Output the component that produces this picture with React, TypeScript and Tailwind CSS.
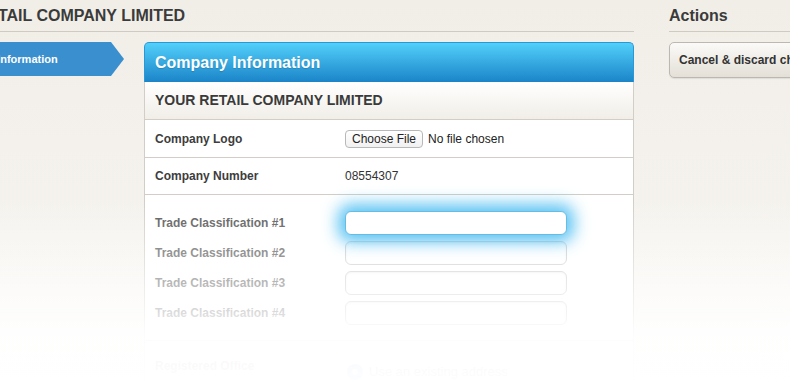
import React from 'react';

const trades = ['Trade Classification #1', 'Trade Classification #2', 'Trade Classification #3', 'Trade Classification #4'];

export default function App() {
  return (
    <div className="relative h-[381px] w-[790px] overflow-hidden bg-gradient-to-b from-[#f1eee8] to-[#f8f6f2] font-['Liberation_Sans',Arial,sans-serif] text-[#3a3a3a]">
      <div className="flex gap-[35px]">
        {/* main column */}
        <div className="w-[634px] shrink-0">
          <div className="h-[32px] overflow-hidden border-b border-[#cfcac2] pt-[7px]">
            <h1 className="-ml-[75px] whitespace-nowrap text-[16px] font-bold leading-[18px] text-[#3b3b3b]">
              YOUR RETAIL COMPANY LIMITED
            </h1>
          </div>

          <div className="mt-[10px] flex gap-[20px]">
            {/* step tab */}
            <div className="h-[34px] w-[124px] shrink-0 overflow-hidden bg-[#3a8fcf] [clip-path:polygon(0_0,calc(100%-13px)_0,100%_50%,calc(100%-13px)_100%,0_100%)]">
              <div className="-ml-[56px] whitespace-nowrap text-[11px] font-bold leading-[34px] text-white">
                Company Information
              </div>
            </div>

            {/* panel */}
            <div className="w-[490px] shrink-0">
              <div className="flex h-[40px] items-center rounded-t-[5px] border border-b-0 border-[#2a97d6] bg-gradient-to-b from-[#52d0fa] to-[#1a84c8] px-[10px]">
                <h2 className="text-[16px] font-bold text-white [text-shadow:0_1px_1px_rgba(0,0,0,0.15)]">Company Information</h2>
              </div>
              <div className="border-x border-[#d2cec7] bg-white">
                <div className="flex h-[38px] items-center border-b border-[#d2cec7] bg-gradient-to-b from-white to-[#f1eee8] px-[10px]">
                  <span className="text-[14px] font-bold text-[#3a3a3a]">YOUR RETAIL COMPANY LIMITED</span>
                </div>

                <div className="flex h-[38px] items-center border-b border-[#d2cec7] px-[10px]">
                  <span className="w-[190px] text-[12px] font-bold text-[#3d3d3d]">Company Logo</span>
                  <div className="flex items-center gap-[5px]">
                    <span className="flex h-[18px] items-center rounded-[4px] border border-[#b8b8b8] bg-gradient-to-b from-white to-[#f1f1f1] px-[6px] text-[12px] text-[#222]">
                      Choose File
                    </span>
                    <span className="text-[12px] text-[#222]">No file chosen</span>
                  </div>
                </div>

                <div className="flex h-[37px] items-center border-b border-[#d2cec7] px-[10px]">
                  <span className="w-[190px] text-[12px] font-bold text-[#3d3d3d]">Company Number</span>
                  <span className="text-[12px] text-[#333]">08554307</span>
                </div>

                <div className="flex flex-col gap-[6px] border-b border-[#d2cec7] px-[10px] pb-[15px] pt-[16px]">
                  {trades.map((t, i) => (
                    <div key={t} className="flex h-[24px] items-center">
                      <span className="w-[190px] text-[12px] font-bold text-[#555]">{t}</span>
                      <div
                        className={
                          i === 0
                            ? 'relative z-10 h-[24px] w-[222px] rounded-[6px] border border-[#66bde4] bg-white shadow-[0_0_16px_7px_rgba(75,190,242,0.9)]'
                            : 'h-[24px] w-[222px] rounded-[6px] border border-[#c9c9c9] bg-white shadow-[inset_0_1px_2px_rgba(0,0,0,0.08)]'
                        }
                      />
                    </div>
                  ))}
                </div>

                <div className="flex h-[60px] items-start px-[10px] pt-[16px]">
                  <span className="w-[190px] text-[12px] font-bold text-[#555]">Registered Office</span>
                  <div className="mt-[5px] flex items-center gap-[6px] pl-[2px]">
                    <span className="flex h-[16px] w-[16px] items-center justify-center rounded-full bg-[#3a8fcf]">
                      <span className="h-[6px] w-[6px] rounded-full bg-white" />
                    </span>
                    <span className="text-[13px] text-[#555]">Use an existing address</span>
                  </div>
                </div>
              </div>
            </div>
          </div>
        </div>

        {/* actions column */}
        <div className="w-[160px] shrink-0">
          <div className="h-[32px] border-b border-[#cfcac2] pt-[7px]">
            <h2 className="text-[16px] font-bold leading-[18px] text-[#3b3b3b]">Actions</h2>
          </div>
          <div className="mt-[10px] flex h-[36px] items-center whitespace-nowrap rounded-[5px] border border-[#bdb8af] bg-gradient-to-b from-[#fbfaf8] to-[#e4e0d8] px-[9px] shadow-[0_1px_1px_rgba(0,0,0,0.08)]">
            <span className="text-[12px] font-bold text-[#333]">Cancel &amp; discard changes</span>
          </div>
        </div>
      </div>

      {/* fade out */}
      <div className="pointer-events-none absolute inset-0 bg-[linear-gradient(to_bottom,rgba(255,255,255,0)_0px,rgba(255,255,255,0)_200px,rgba(255,255,255,0.95)_335px,rgba(255,255,255,0.985)_381px)]" />
    </div>
  );
}
